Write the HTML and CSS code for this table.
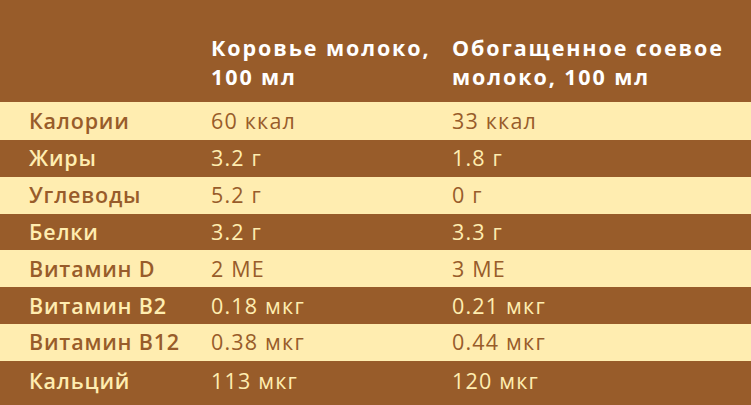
FILE: index.html
```html
<!DOCTYPE html>
<html lang="ru">
<head>
<meta charset="utf-8">
<link rel="stylesheet" href="styles.css">
</head>
<body>
<table class="milk">
  <colgroup><col class="c1"><col class="c2"><col class="c3"></colgroup>
  <thead>
    <tr class="head">
      <th></th>
      <th>Коровье молоко, 100&nbsp;мл</th>
      <th>Обогащенное соевое молоко, 100&nbsp;мл</th>
    </tr>
  </thead>
  <tbody>
    <tr class="light first"><td>Калории</td><td>60 ккал</td><td>33 ккал</td></tr>
    <tr class="dark"><td>Жиры</td><td>3.2 г</td><td>1.8 г</td></tr>
    <tr class="light"><td>Углеводы</td><td>5.2 г</td><td>0 г</td></tr>
    <tr class="dark"><td>Белки</td><td>3.2 г</td><td>3.3 г</td></tr>
    <tr class="light"><td>Витамин D</td><td>2 МЕ</td><td>3 МЕ</td></tr>
    <tr class="dark"><td>Витамин B2</td><td>0.18 мкг</td><td>0.21 мкг</td></tr>
    <tr class="light"><td>Витамин B12</td><td>0.38 мкг</td><td>0.44 мкг</td></tr>
    <tr class="dark last"><td>Кальций</td><td>113 мкг</td><td>120 мкг</td></tr>
  </tbody>
</table>
</body>
</html>
```

FILE: styles.css
```css
html, body {
  margin: 0;
  padding: 0;
  background: #985c2a;
}
body {
  width: 751px;
  height: 405px;
  overflow: hidden;
  font-family: "Open Sans", "DejaVu Sans", sans-serif;
}
.milk {
  width: 751px;
  border-collapse: collapse;
  table-layout: fixed;
}
.c1 { width: 211px; }
.c2 { width: 241px; }
.c3 { width: 299px; }
.milk th, .milk td {
  padding: 0;
  text-align: left;
}
.head th {
  height: 102px;
  box-sizing: border-box;
  padding: 33px 4px 10px 0;
  vertical-align: top;
  color: #ffffff;
  font-size: 21.5px;
  font-weight: 700;
  letter-spacing: 1.9px;
  line-height: 29px;
}
.milk td {
  height: 36.8px;
  font-size: 21.5px;
  font-weight: 500;
  letter-spacing: 1.2px;
  line-height: 24px;
  vertical-align: middle;
}
.milk td:first-child {
  padding-left: 29px;
  font-weight: 600;
  letter-spacing: 0.8px;
}
.first td { height: 38px; }
.last td { height: 44px; vertical-align: top; padding-top: 8px; }
.light { background: #ffedb0; color: #985c2a; }
.dark { background: #985c2a; color: #ffedb0; }
```
